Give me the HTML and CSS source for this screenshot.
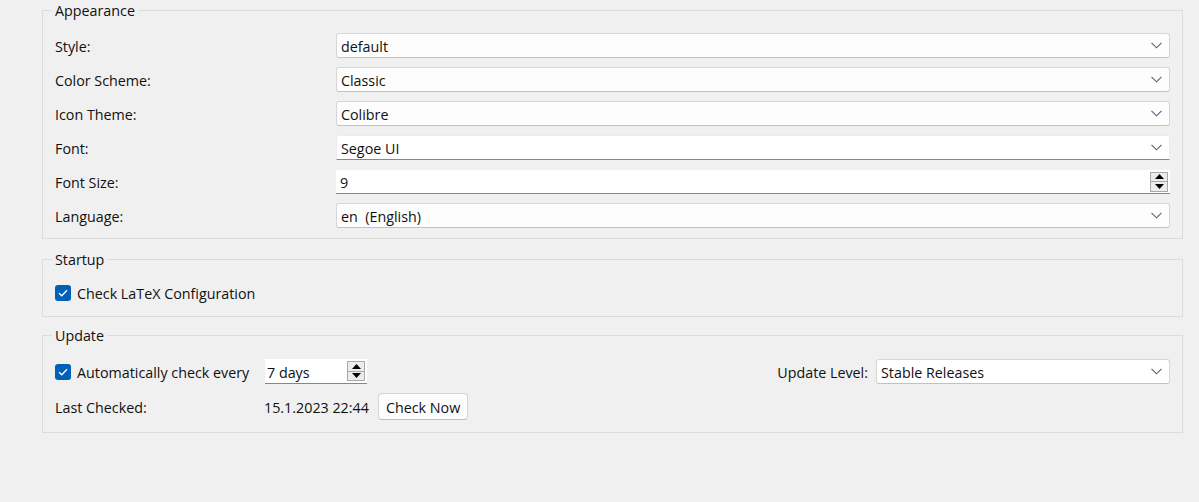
FILE: index.html
```html
<!DOCTYPE html>
<html>
<head>
<meta charset="utf-8">
<link rel="stylesheet" href="styles.css">
</head>
<body>
<fieldset class="group group-appearance">
  <legend>Appearance</legend>
  <div class="form-row"><span class="label">Style:</span><div class="combo"><span class="txt">default</span><svg class="chev" width="11" height="7" viewBox="0 0 11 7"><polyline points="0.5,0.8 5.5,5.8 10.5,0.8" fill="none" stroke="#5e5e7c" stroke-width="1.1"/></svg></div></div>
  <div class="form-row"><span class="label">Color Scheme:</span><div class="combo"><span class="txt">Classic</span><svg class="chev" width="11" height="7" viewBox="0 0 11 7"><polyline points="0.5,0.8 5.5,5.8 10.5,0.8" fill="none" stroke="#5e5e7c" stroke-width="1.1"/></svg></div></div>
  <div class="form-row"><span class="label">Icon Theme:</span><div class="combo"><span class="txt">Colibre</span><svg class="chev" width="11" height="7" viewBox="0 0 11 7"><polyline points="0.5,0.8 5.5,5.8 10.5,0.8" fill="none" stroke="#5e5e7c" stroke-width="1.1"/></svg></div></div>
  <div class="form-row"><span class="label">Font:</span><div class="combo combo-edit"><span class="txt">Segoe UI</span><svg class="chev" width="11" height="7" viewBox="0 0 11 7"><polyline points="0.5,0.8 5.5,5.8 10.5,0.8" fill="none" stroke="#5e5e7c" stroke-width="1.1"/></svg></div></div>
  <div class="form-row"><span class="label">Font Size:</span><div class="spin spin-wide"><span class="txt">9</span><div class="spin-btns"><div class="spin-btn"><svg width="9" height="5" viewBox="0 0 9 5"><polygon points="0,5 4.5,0 9,5" fill="#000"/></svg></div><div class="spin-btn"><svg width="9" height="5" viewBox="0 0 9 5"><polygon points="0,0 4.5,5 9,0" fill="#000"/></svg></div></div></div></div>
  <div class="form-row"><span class="label">Language:</span><div class="combo"><span class="txt">en&nbsp; (English)</span><svg class="chev" width="11" height="7" viewBox="0 0 11 7"><polyline points="0.5,0.8 5.5,5.8 10.5,0.8" fill="none" stroke="#5e5e7c" stroke-width="1.1"/></svg></div></div>
</fieldset>

<fieldset class="group group-startup">
  <legend>Startup</legend>
  <div class="check-row">
    <span class="checkbox"><svg width="10" height="8" viewBox="0 0 10 8"><polyline points="1,4.2 3.8,6.8 9,1.2" fill="none" stroke="#fff" stroke-width="1.3"/></svg></span>
    <span class="txt">Check LaTeX Configuration</span>
  </div>
</fieldset>

<fieldset class="group group-update">
  <legend>Update</legend>
  <div class="update-row">
    <div class="check-row auto-check">
      <span class="checkbox"><svg width="10" height="8" viewBox="0 0 10 8"><polyline points="1,4.2 3.8,6.8 9,1.2" fill="none" stroke="#fff" stroke-width="1.3"/></svg></span>
      <span class="txt">Automatically check every</span>
    </div>
    <div class="spin spin-days"><span class="txt">7 days</span><div class="spin-btns"><div class="spin-btn"><svg width="9" height="5" viewBox="0 0 9 5"><polygon points="0,5 4.5,0 9,5" fill="#000"/></svg></div><div class="spin-btn"><svg width="9" height="5" viewBox="0 0 9 5"><polygon points="0,0 4.5,5 9,0" fill="#000"/></svg></div></div></div>
    <div class="spacer"></div>
    <span class="level-label txt">Update Level:</span>
    <div class="combo combo-level"><span class="txt">Stable Releases</span><svg class="chev" width="11" height="7" viewBox="0 0 11 7"><polyline points="0.5,0.8 5.5,5.8 10.5,0.8" fill="none" stroke="#5e5e7c" stroke-width="1.1"/></svg></div>
  </div>
  <div class="last-row">
    <span class="last-label txt">Last Checked:</span>
    <span class="last-date txt">15.1.2023 22:44</span>
    <button class="btn">Check Now</button>
  </div>
</fieldset>
</body>
</html>
```
FILE: styles.css
```css
html, body {
  margin: 0;
  padding: 0;
  background: #f0f0f0;
}
body {
  width: 1199px;
  height: 502px;
  overflow: hidden;
  font-family: "Open Sans", "Noto Sans", sans-serif;
  font-size: 14.3px;
  color: #111;
}
.txt, .label {
  padding-top: 2px;
}
.group {
  margin: 0 16px 0 42px;
  padding: 13px 12px 10px 12px;
  border: 1px solid #dcdcdc;
  min-width: 0;
}
.group legend {
  padding: 2px 3px 0 3px;
  margin-left: -3px;
  line-height: 18px;
  height: 20px;
  box-sizing: border-box;
}
.group-startup {
  margin-top: 10px;
  padding-top: 11px;
  padding-bottom: 11px;
}
.group-update {
  margin-top: 8px;
  padding-top: 14px;
  padding-bottom: 12px;
}
.form-row {
  display: flex;
  align-items: center;
  height: 25px;
}
.form-row + .form-row {
  margin-top: 9px;
}
.label {
  width: 281px;
  flex: none;
}
.combo {
  flex: 1;
  height: 25px;
  box-sizing: border-box;
  display: flex;
  align-items: center;
  justify-content: space-between;
  padding: 0 6px 0 4px;
  background: #fdfdfd;
  border: 1px solid #d6d6d6;
  border-bottom-color: #c2c2c2;
  border-radius: 3px;
}
.combo-edit {
  background: #fff;
  border-color: #ececec;
  border-bottom: 1px solid #878787;
  border-radius: 3px 3px 0 0;
}
.chev {
  flex: none;
  margin-right: 1px;
}
.spin {
  display: flex;
  align-items: center;
  justify-content: space-between;
  box-sizing: border-box;
  height: 25px;
  background: #fff;
  border-bottom: 1px solid #878787;
}
.spin-wide {
  flex: 1;
  padding: 0 2px 0 4px;
  border-top: 1px solid #f2f2f2;
}
.spin-btns {
  display: flex;
  flex-direction: column;
  width: 18px;
  height: 20px;
  box-sizing: border-box;
  border: 1px solid #a9a9a9;
  background: #ececec;
  flex: none;
}
.spin-btn {
  flex: 1;
  display: flex;
  align-items: center;
  justify-content: center;
}
.spin-btn + .spin-btn {
  border-top: 1px solid #a9a9a9;
}
.check-row {
  display: flex;
  align-items: center;
  height: 25px;
}
.checkbox {
  width: 16px;
  height: 16px;
  border-radius: 3px;
  background: #005fb8;
  display: flex;
  align-items: center;
  justify-content: center;
  margin-right: 6px;
  flex: none;
}
.update-row {
  display: flex;
  align-items: center;
  height: 25px;
}
.auto-check {
  width: 210px;
  flex: none;
}
.spin-days {
  width: 102px;
  flex: none;
  padding: 0 2px 0 2px;
}
.spacer {
  flex: 1;
}
.level-label {
  margin-right: 8px;
}
.combo-level {
  flex: none;
  width: 294px;
  background: #fff;
}
.last-row {
  display: flex;
  align-items: center;
  height: 27px;
  margin-top: 9px;
}
.last-label {
  width: 209px;
  flex: none;
}
.last-date {
  margin-right: 9px;
}
.btn {
  font: inherit;
  color: inherit;
  height: 27px;
  padding: 2px 7px 0 7px;
  background: #fdfdfd;
  border: 1px solid #d4d4d4;
  border-bottom-color: #bdbdbd;
  border-radius: 4px;
}
```
